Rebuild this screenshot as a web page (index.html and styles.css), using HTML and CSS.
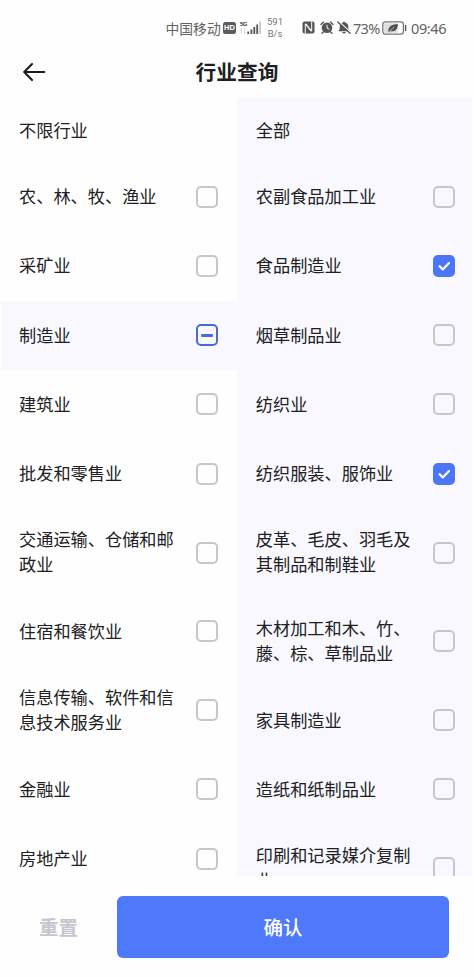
FILE: index.html
```html
<!DOCTYPE html>
<html lang="zh-CN">
<head>
<meta charset="utf-8">
<title>行业查询</title>
<link rel="stylesheet" href="styles.css">
</head>
<body>
<div class="status">
  <span class="carrier">中国移动</span>
  <span class="hd">HD</span>
  <span class="net"><b>5G</b><svg class="arrows" width="6" height="6" viewBox="0 0 6 6"><path d="M1.5 5.5V.8L.4 2M4.5.5v4.7L5.6 4"/></svg></span>
  <svg class="signal" width="14" height="13" viewBox="0 0 14 13"><path d="M.3 10.5h1.8V13H.3zM3.5 8.5h1.8V13H3.5zM6.4 6h1.8v7H6.4zM9.3 3.5h1.8V13H9.3z"/><path class="dim" d="M12.3.5H14V13h-1.7z"/></svg>
  <span class="speed"><span>591</span><span>B/s</span></span>
  <svg class="nfc" width="13" height="13" viewBox="0 0 13 13"><rect class="solid" x=".5" y=".5" width="12" height="12" rx="2"/><path class="cut" d="M3.300 12.500V3L9.200 10.500M9.700.5V10L3.800 2.500"/></svg>
  <svg class="alarm" width="14" height="13" viewBox="0 0 14 13"><circle class="solid" cx="7" cy="6.8" r="5.3"/><path class="line" d="M.9 3.4 3.5 1.1M13.1 3.4 10.5 1.1M3.3 11 2 12.3M10.7 11l1.3 1.3"/><path class="cut" d="M7 3.8v3.3l2.4 1.2"/></svg>
  <svg class="bell" width="14" height="13" viewBox="0 0 14 13"><path class="solid" d="M1.2 10.2 2.7 8V5.5C2.7 3.3 4 1.900 6 1.400c.2-1.300 1.800-1.300 2 0 2 .5 3.300 1.900 3.300 4.100V8l1.500 2.200zM5.300 11h3.400c-.4 2-3 2-3.400 0z"/><path class="gap" d="M1.700.2 14 11.800"/><path class="line" d="M.8 1 13 12.300"/></svg>
  <span class="percent">73%</span>
  <svg class="battery" width="25" height="14" viewBox="0 0 25 14"><rect class="case" x=".8" y=".8" width="20.6" height="12.4" rx="2.6"/><rect class="charge" x="2.2" y="2.2" width="13.5" height="9.6" rx="1"/><path class="line" d="M23.6 4.5v5"/><path class="leaf" d="M6.500 10.800C5.700 6 9.500 3.200 15.800 3c.2 5.300-3 8.500-7.600 7l-1.100 1.400z"/><path class="vein" d="M7.500 10.200 12.300 6"/></svg>
  <span class="clock">09:46</span>
</div>
<header class="header">
  <svg class="back" width="24" height="20" viewBox="0 0 24 20"><path d="M22.3 10H2.5M10 2 2.200 10l7.800 8"/></svg>
  <h1>行业查询</h1>
</header>
<main class="columns">
  <div class="column major">
    <div class="row top"><span class="label">不限行业</span></div>
    <div class="row"><span class="label">农、林、牧、渔业</span><i class="box"></i></div>
    <div class="row"><span class="label">采矿业</span><i class="box"></i></div>
    <div class="row active"><span class="label">制造业</span><i class="box partial"></i></div>
    <div class="row"><span class="label">建筑业</span><i class="box"></i></div>
    <div class="row"><span class="label">批发和零售业</span><i class="box"></i></div>
    <div class="row tall"><span class="label">交通运输、仓储和邮政业</span><i class="box"></i></div>
    <div class="row"><span class="label">住宿和餐饮业</span><i class="box"></i></div>
    <div class="row tall"><span class="label">信息传输、软件和信息技术服务业</span><i class="box"></i></div>
    <div class="row"><span class="label">金融业</span><i class="box"></i></div>
    <div class="row"><span class="label">房地产业</span><i class="box"></i></div>
  </div>
  <div class="column minor">
    <div class="row top"><span class="label">全部</span></div>
    <div class="row"><span class="label">农副食品加工业</span><i class="box"></i></div>
    <div class="row"><span class="label">食品制造业</span><i class="box checked"><svg width="22" height="22" viewBox="0 0 22 22"><path d="m6.6 11.2 3.2 3.2 6.2-6.3"/></svg></i></div>
    <div class="row"><span class="label">烟草制品业</span><i class="box"></i></div>
    <div class="row"><span class="label">纺织业</span><i class="box"></i></div>
    <div class="row"><span class="label">纺织服装、服饰业</span><i class="box checked"><svg width="22" height="22" viewBox="0 0 22 22"><path d="m6.6 11.2 3.2 3.2 6.2-6.3"/></svg></i></div>
    <div class="row tall"><span class="label">皮革、毛皮、羽毛及其制品和制鞋业</span><i class="box"></i></div>
    <div class="row tall"><span class="label">木材加工和木、竹、藤、棕、草制品业</span><i class="box"></i></div>
    <div class="row"><span class="label">家具制造业</span><i class="box"></i></div>
    <div class="row"><span class="label">造纸和纸制品业</span><i class="box"></i></div>
    <div class="row tall"><span class="label">印刷和记录媒介复制业</span><i class="box"></i></div>
  </div>
</main>
<footer class="footer">
  <button class="reset">重置</button>
  <button class="confirm">确认</button>
</footer>
</body>
</html>
```
FILE: styles.css
```css
* { box-sizing: border-box; }
body {
  margin: 0;
  width: 474px;
  height: 977px;
  overflow: hidden;
  display: flex;
  flex-direction: column;
  background: #fefefe;
  color: #202022;
  font-family: "Noto Sans CJK SC", sans-serif;
}
svg { flex: none; display: block; fill: none; }

.status {
  height: 45px;
  flex: none;
  padding: 10px 0 0 165.5px;
  display: flex;
  align-items: center;
  color: #626262;
  white-space: nowrap;
}
.carrier { width: 55.5px; flex: none; font-size: 13.8px; line-height: 20px; }
.hd {
  width: 13px;
  height: 12px;
  margin-left: 2px;
  flex: none;
  border-radius: 2.5px;
  background: #5c5c5c;
  color: #fff;
  font: bold 7.5px/12px "Liberation Sans", sans-serif;
  text-align: center;
}
.net { width: 7px; margin-left: 4px; font: 6px/7px "Liberation Sans", sans-serif; letter-spacing: -.6px; color: #333; }
.arrows { stroke: #c4c4c4; stroke-width: .8; }
.signal { fill: #555; }
.signal .dim { fill: #c4c4c4; }
.speed {
  width: 18px;
  margin-left: 5px;
  display: flex;
  flex-direction: column;
  align-items: center;
  font: 9.5px/11.3px Roboto, sans-serif;
  color: #777;
}
.solid { fill: #555; }
.line { stroke: #555; stroke-width: 1.4; stroke-linecap: round; }
.cut { stroke: #fefefe; stroke-width: 1; }
.gap { stroke: #fefefe; stroke-width: 1.3; }
.nfc { margin-left: 18px; }
.alarm { margin-left: 5px; }
.bell { margin-left: 3px; }
.percent { width: 27px; flex: none; margin-left: 2px; font: 14.5px/20px "Noto Sans", sans-serif; letter-spacing: -.7px; }
.battery { margin-left: 2px; }
.case { stroke: #777; stroke-width: 1.3; }
.charge { fill: #dedede; }
.leaf { fill: #505050; }
.vein { stroke: #ddd; stroke-width: .7; }
.clock { margin-left: 4px; font: 14.5px/20px "Noto Sans", sans-serif; letter-spacing: -.4px; }

.header {
  height: 53px;
  flex: none;
  display: grid;
  grid-template-columns: 86px 1fr 86px;
  align-items: center;
}
.back { margin-left: 22px; stroke: #1c1c1e; stroke-width: 2.1; stroke-linecap: round; stroke-linejoin: round; }
.header h1 { margin: 0; padding-bottom: 2px; font-size: 20.7px; line-height: 30px; font-weight: 700; text-align: center; }

.columns { height: 778px; flex: none; display: flex; overflow: hidden; padding: 0 2px 0 1px; }
.column { flex: none; }
.major { width: 236px; }
.minor { width: 235px; background: #f8f8fe; }
.row {
  height: 69.05px;
  display: flex;
  align-items: center;
  justify-content: space-between;
  padding: 0 19px 0 18px;
}
.minor .row { padding: 0 17px 0 18.8px; }
.top { height: 64.8px; }
.tall { height: 88.95px; }
.active { background: #f8f8fe; }
.label { width: 159px; padding-bottom: 1.2px; font-size: 17.2px; line-height: 24.6px; }
.box {
  width: 22px;
  height: 22px;
  flex: none;
  border: 2px solid #c6c6cd;
  border-radius: 5px;
  display: flex;
  align-items: center;
  justify-content: center;
}
.partial { border-color: #496bd5; }
.partial::before { content: ""; width: 12px; height: 3px; border-radius: 1px; background: #496bd5; }
.checked { border-color: #4b76f8; background: #4b76f8; }
.checked svg { stroke: #fff; stroke-width: 2.2; stroke-linecap: round; stroke-linejoin: round; }

.footer { flex: 1; display: flex; align-items: flex-start; padding: 19.5px 25px 0 0; }
button { border: 0; padding: 0; font: 19.5px/28px "Noto Sans CJK SC", sans-serif; }
.reset { width: 117px; height: 62px; background: none; color: #c5c5d0; font-weight: 700; }
.confirm { flex: 1; height: 62px; border-radius: 6px; background: #4e79fb; color: #fff; font-weight: 500; }
```
